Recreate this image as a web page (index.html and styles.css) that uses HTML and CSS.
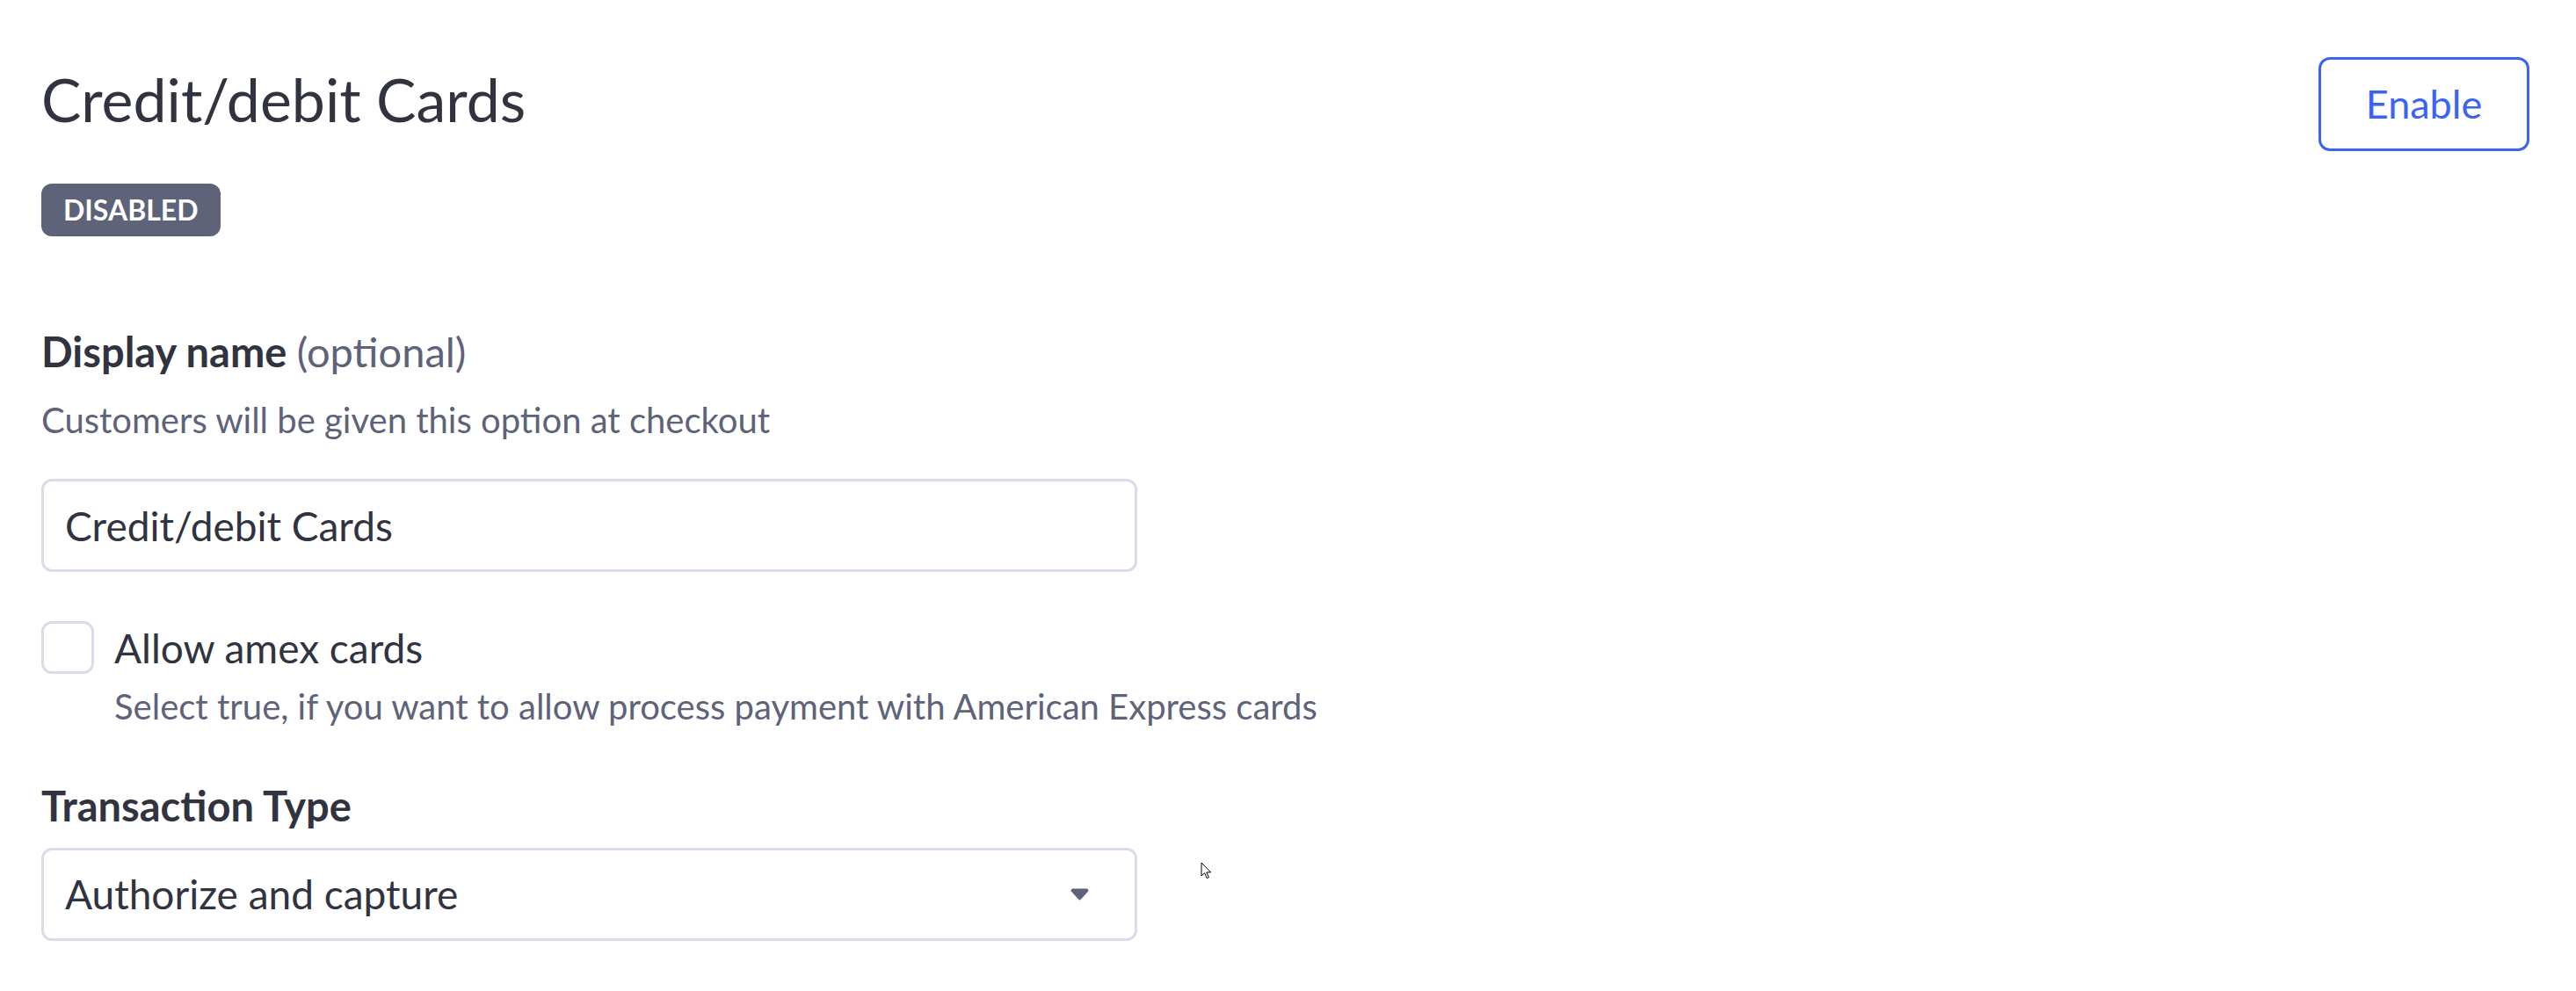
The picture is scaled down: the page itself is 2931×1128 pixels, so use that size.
FILE: index.html
```html
<!DOCTYPE html>
<html lang="en">
<head>
<meta charset="utf-8">
<title>Credit/debit Cards</title>
<link rel="stylesheet" href="styles.css">
</head>
<body>
<div class="page">
  <header class="header">
    <div class="header-main">
      <h1 class="title">Credit/debit Cards</h1>
      <span class="badge">DISABLED</span>
    </div>
    <button class="btn-enable" type="button">Enable</button>
  </header>

  <form class="form">
    <div class="field">
      <label class="label" for="display-name">Display name <span class="optional">(optional)</span></label>
      <p class="helper helper-desc">Customers will be given this option at checkout</p>
      <input class="text-input" id="display-name" type="text" value="Credit/debit Cards">
    </div>

    <div class="check-row">
      <span class="checkbox" role="checkbox" aria-checked="false"></span>
      <div class="check-text">
        <div class="check-label">Allow amex cards</div>
        <p class="helper check-helper">Select true, if you want to allow process payment with American Express cards</p>
      </div>
    </div>

    <div class="field field-select">
      <div class="label">Transaction Type</div>
      <div class="select">
        <span class="select-value">Authorize and capture</span>
        <svg class="select-arrow" width="21" height="14" viewBox="0 0 21 14" aria-hidden="true">
          <path d="M2.6 0.5 H18.4 A2 2 0 0 1 19.9 3.8 L12 12.6 A2 2 0 0 1 9 12.6 L1.1 3.8 A2 2 0 0 1 2.6 0.5 Z" fill="#5E637A"/>
        </svg>
      </div>
    </div>
  </form>

  <svg class="cursor" width="13" height="20" viewBox="0 0 13 20" aria-hidden="true">
    <path d="M1 1 L1 16 L4.6 12.7 L7.2 18.6 L9.4 17.6 L6.9 11.9 L11.6 11.9 Z" fill="#fff" stroke="#000" stroke-width="1" stroke-linejoin="miter"/>
  </svg>
</div>
</body>
</html>
```

FILE: styles.css
```css
* {
  box-sizing: border-box;
}

html, body {
  margin: 0;
  padding: 0;
  background: #ffffff;
}

body {
  font-family: "Lato", "Liberation Sans", sans-serif;
  color: #313440;
}

.page {
  position: relative;
  padding: 65px 53px 0 47px;
  min-height: 1128px;
}

.header {
  display: flex;
  justify-content: space-between;
  align-items: flex-start;
}

.header-main {
  display: flex;
  flex-direction: column;
  align-items: flex-start;
}

.title {
  margin: 0;
  font-size: 68px;
  line-height: 95px;
  font-weight: 400;
  color: #313440;
}

.badge {
  margin-top: 49px;
  display: inline-block;
  height: 60px;
  line-height: 60px;
  padding: 0 25px;
  border-radius: 12px;
  background: #5E637A;
  color: #ffffff;
  font-size: 32px;
  font-weight: 700;
}

.btn-enable {
  height: 107px;
  width: 240px;
  padding: 0;
  border: 3px solid #3C64F4;
  border-radius: 13px;
  background: #ffffff;
  color: #3C64F4;
  font-family: "Lato", "Liberation Sans", sans-serif;
  font-size: 45px;
  line-height: 101px;
  font-weight: 400;
  text-align: center;
}

.form {
  margin-top: 101px;
  display: flex;
  flex-direction: column;
}

.field {
  display: flex;
  flex-direction: column;
}

.label {
  font-size: 47px;
  line-height: 60px;
  font-weight: 700;
  color: #313440;
}

.optional {
  font-weight: 400;
  color: #5E637A;
}

.helper {
  margin: 0;
  font-size: 40px;
  line-height: 50px;
  color: #5E637A;
}

.helper-desc {
  margin-top: 23px;
}

.text-input {
  margin-top: 42px;
  width: 1247px;
  height: 106px;
  border: 3px solid #D9DCE9;
  border-radius: 12px;
  padding: 0 24px;
  font-family: "Lato", "Liberation Sans", sans-serif;
  font-size: 46px;
  line-height: 100px;
  color: #313440;
  background: #ffffff;
  outline: none;
}

.check-row {
  margin-top: 57px;
  display: grid;
  grid-template-columns: 60px 1fr;
  column-gap: 23px;
  align-items: start;
}

.checkbox {
  display: block;
  width: 60px;
  height: 60px;
  margin-top: -1px;
  border: 3px solid #D9DCE9;
  border-radius: 12px;
  background: #ffffff;
}

.check-label {
  font-size: 46px;
  line-height: 60px;
  color: #313440;
}

.check-helper {
  margin-top: 11px;
}

.field-select {
  margin-top: 58px;
}

.select {
  margin-top: 18px;
  width: 1247px;
  height: 106px;
  border: 3px solid #D9DCE9;
  border-radius: 12px;
  padding: 0 52px 0 24px;
  display: flex;
  align-items: center;
  justify-content: space-between;
}

.select-value {
  font-size: 46px;
  line-height: 100px;
  color: #313440;
}

.select-arrow {
  display: block;
}

.cursor {
  position: absolute;
  left: 1366px;
  top: 981px;
}
```
